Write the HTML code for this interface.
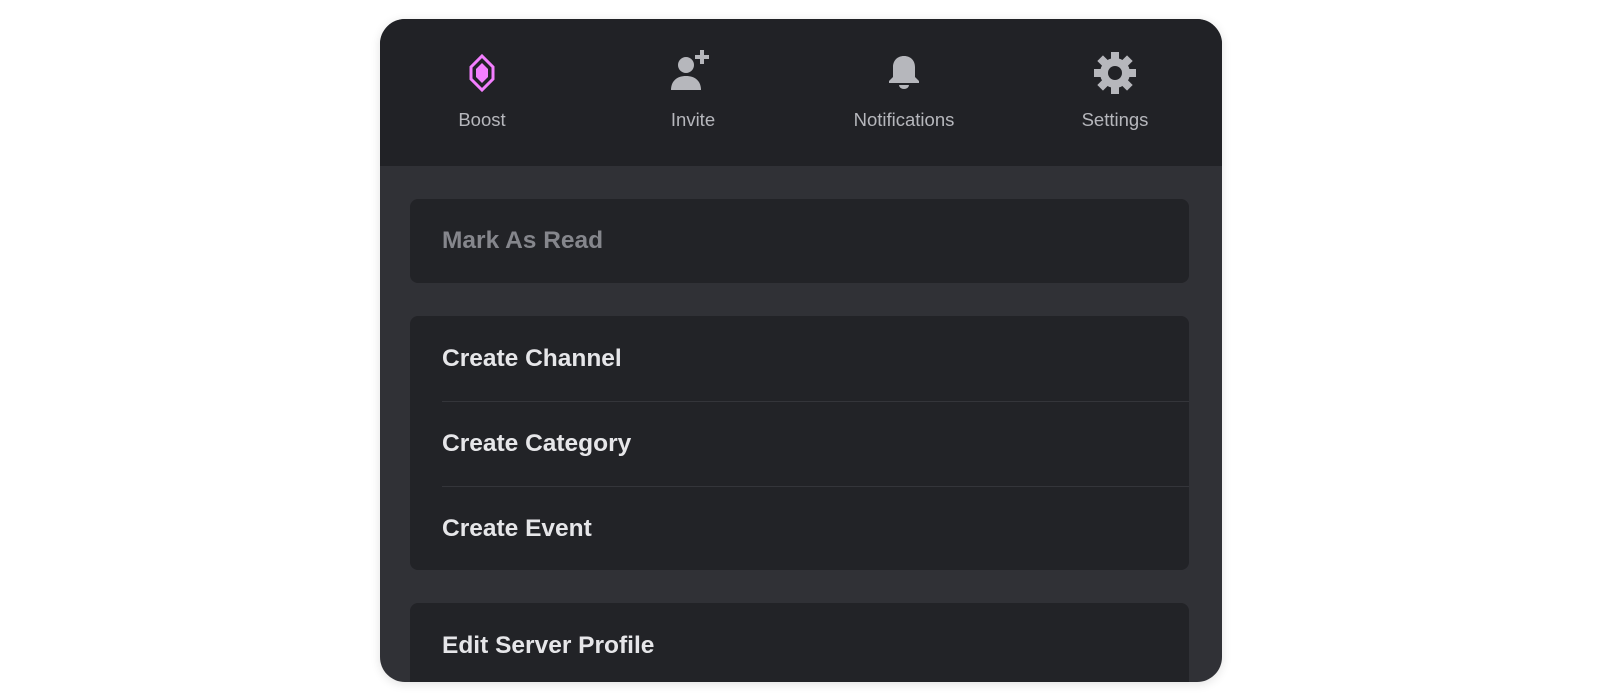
<!DOCTYPE html>
<html><head><style>
html,body{margin:0;background:#fff;width:1600px;height:700px;overflow:hidden;font-family:"Liberation Sans",sans-serif}
.card{position:absolute;left:380px;top:19px;width:842px;height:663px;border-radius:25px;overflow:hidden;background:#303136;box-shadow:0 2px 10px rgba(0,0,0,.12)}
.hdr{position:absolute;left:0;top:0;width:842px;height:147px;background:#212226}
.tab{position:absolute;top:0;width:200px;text-align:center;color:#b6b7bc;font-size:18.5px}
.tab svg{position:absolute;left:50%;transform:translateX(-50%);top:30px}
.tab span{position:absolute;left:0;right:0;top:90px}
.grp{position:absolute;left:30px;width:779px;background:#222327;border-radius:8px;overflow:hidden}
.row{height:85px;position:relative;color:#e6e6e9;font-size:24.5px;font-weight:bold;line-height:85px;padding-left:32px;box-sizing:border-box}
.row+.row:before{content:"";position:absolute;left:32px;right:0;top:0;height:1px;background:#34353a}
</style></head><body>
<div class="card">
<div class="hdr">
 <div class="tab" style="left:2px"><svg width="30" height="40" viewBox="0 0 30 40" style="top:34px"><polygon points="15,3 26,14 26,26 15,37 4,26 4,14" fill="none" stroke="#f47fff" stroke-width="3"/><polygon points="15,10 21,16 21,24 15,30 9,24 9,16" fill="#f47fff"/></svg><span>Boost</span></div>
 <div class="tab" style="left:213px"><svg width="50" height="44" viewBox="0 0 50 44" style="top:29px"><circle cx="18" cy="17" r="8" fill="#b6b7bc"/><path d="M3 42c0-9 6-14 15-14s15 5 15 14z" fill="#b6b7bc"/><path d="M34 2v14M27 9h14" stroke="#b6b7bc" stroke-width="4"/></svg><span>Invite</span></div>
 <div class="tab" style="left:424px"><svg width="40" height="40" viewBox="0 0 40 40" style="top:34px"><path d="M20 3c-7 0-11 5-11 11v10l-4 4v2h30v-2l-4-4V14C31 8 27 3 20 3z" fill="#b6b7bc"/><path d="M15 32a5 4 0 0010 0z" fill="#b6b7bc"/></svg><span>Notifications</span></div>
 <div class="tab" style="left:635px"><svg width="44" height="44" viewBox="0 0 44 44" style="top:32px"><g fill="#b6b7bc" transform="translate(22 22)"><rect x="-4" y="-21" width="8" height="42"/><rect x="-4" y="-21" width="8" height="42" transform="rotate(45)"/><rect x="-4" y="-21" width="8" height="42" transform="rotate(90)"/><rect x="-4" y="-21" width="8" height="42" transform="rotate(135)"/><circle r="15"/></g><circle cx="22" cy="22" r="7" fill="#212226"/></svg><span>Settings</span></div>
</div>
<div class="grp" style="top:180px"><div class="row" style="height:84px;line-height:84px;color:#85868c">Mark As Read</div></div>
<div class="grp" style="top:297px"><div class="row">Create Channel</div><div class="row">Create Category</div><div class="row" style="height:84px">Create Event</div></div>
<div class="grp" style="top:584px;height:120px"><div class="row">Edit Server Profile</div></div>
</div>
</body></html>
